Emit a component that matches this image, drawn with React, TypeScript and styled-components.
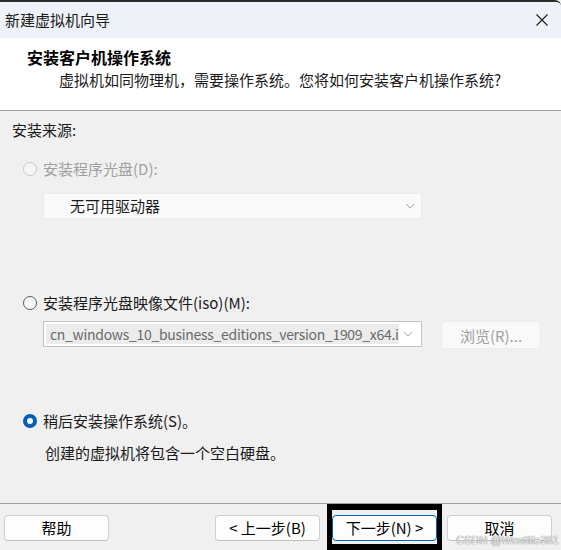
import styled, { createGlobalStyle, css } from 'styled-components'

const GlobalStyle = createGlobalStyle`
  html, body {
    margin: 0;
    padding: 0;
    background: #f0f0f0;
  }
  body {
    font-family: "Noto Sans CJK SC", "Noto Sans", sans-serif;
    font-size: 15px;
    color: #1a1a1a;
  }
`

const Window = styled.div`
  position: relative;
  width: 561px;
  height: 550px;
  display: flex;
  flex-direction: column;
  overflow: hidden;
  border-top: 2px solid #2d2d2d;
  box-sizing: border-box;
  border-top-right-radius: 6px;
`

const TitleBar = styled.div`
  height: 36px;
  display: flex;
  align-items: center;
  justify-content: space-between;
  padding: 0 13px 0 5px;
  background: #eef1f7;
`

const TitleText = styled.span`
  font-size: 15px;
  line-height: 20px;
  color: #1a1a1a;
`

const CloseButton = styled.button`
  width: 20px;
  height: 20px;
  padding: 0;
  border: none;
  background: transparent;
  display: flex;
  align-items: center;
  justify-content: flex-end;
`

const Header = styled.div`
  height: 73px;
  box-sizing: border-box;
  background: #ffffff;
  border-bottom: 1px solid #a0a0a0;
  padding-top: 9px;
  display: flex;
  flex-direction: column;
  gap: 3px;
`

const HeaderTitle = styled.div`
  padding-left: 27px;
  font-size: 16px;
  font-weight: 700;
  line-height: 20px;
  color: #000;
`

const HeaderSubtitle = styled.div`
  padding-left: 59px;
  font-size: 15px;
  line-height: 20px;
  color: #1a1a1a;
`

const Content = styled.div`
  flex: 1;
  display: flex;
  flex-direction: column;
  padding: 9px 0 0 12px;
  background: #f0f0f0;
`

const Line = styled.div<{ $top?: number; $indent?: number }>`
  margin-top: ${({ $top = 0 }) => $top}px;
  margin-left: ${({ $indent = 0 }) => $indent}px;
  line-height: 20px;
  font-size: 15px;
  color: #1a1a1a;
`

const RadioRow = styled.label<{ $top: number; $disabled?: boolean }>`
  margin-top: ${({ $top }) => $top}px;
  display: flex;
  align-items: center;
  gap: 6px;
  height: 20px;
  margin-left: 11px;
  line-height: 20px;
  color: ${({ $disabled }) => ($disabled ? '#a0a0a0' : '#1a1a1a')};
`

const RadioDot = styled.span<{ $checked?: boolean; $disabled?: boolean }>`
  width: 14px;
  height: 14px;
  box-sizing: border-box;
  border-radius: 50%;
  flex-shrink: 0;
  ${({ $checked, $disabled }) =>
    $checked
      ? css`
          background: #005fb8;
          display: flex;
          align-items: center;
          justify-content: center;
          &::after {
            content: '';
            width: 6px;
            height: 6px;
            border-radius: 50%;
            background: #fff;
          }
        `
      : css`
          border: 1px solid ${$disabled ? '#c6c6c6' : '#5a5a5a'};
          background: ${$disabled ? '#f5f5f5' : '#f7f7f7'};
        `}
`

const FieldRow = styled.div<{ $top: number }>`
  margin-top: ${({ $top }) => $top}px;
  margin-left: 31px;
  display: flex;
  align-items: flex-start;
  gap: 19px;
`

const Combo = styled.div<{ $variant: 'empty' | 'file' }>`
  width: 379px;
  height: 26px;
  box-sizing: border-box;
  display: flex;
  align-items: center;
  ${({ $variant }) =>
    $variant === 'empty'
      ? css`
          background: #fafafa;
          border: 1px solid #ececec;
          border-radius: 2px;
        `
      : css`
          background: #ffffff;
          border: 1px solid #c4c4c4;
          padding: 2px;
        `}
`

const ComboText = styled.div<{ $variant: 'empty' | 'file' }>`
  flex: 1;
  height: 100%;
  min-width: 0;
  overflow: hidden;
  white-space: nowrap;
  line-height: 20px;
  display: flex;
  align-items: center;
  ${({ $variant }) =>
    $variant === 'empty'
      ? css`
          padding-left: 26px;
          color: #1a1a1a;
        `
      : css`
          padding-left: 4px;
          margin-right: 4px;
          background: #ececec;
          color: #6a6a6a;
          font-size: 14px;
          letter-spacing: -0.3px;
        `}
`

const Chevron = styled.svg`
  flex-shrink: 0;
  margin-right: 6px;
`

const BrowseButton = styled.button`
  width: 100px;
  height: 28px;
  box-sizing: border-box;
  background: #f9f9f9;
  border: 1px solid #ececec;
  border-radius: 4px;
  font-family: inherit;
  font-size: 15px;
  color: #a0a0a0;
  padding: 0;
`

const Footer = styled.div`
  height: 47px;
  box-sizing: border-box;
  border-top: 1px solid #a0a0a0;
  padding: 11px 9px 0 4px;
  display: flex;
  align-items: flex-start;
  background: #f0f0f0;
`

const Spacer = styled.div`
  flex: 1;
`

const DialogButton = styled.button<{ $primary?: boolean; $gap?: number }>`
  width: 105px;
  height: 26px;
  box-sizing: border-box;
  margin-left: ${({ $gap = 0 }) => $gap}px;
  background: #fdfdfd;
  border: 1px solid ${({ $primary }) => ($primary ? '#005fb8' : '#d0d0d0')};
  border-bottom-color: ${({ $primary }) => ($primary ? '#005fb8' : '#c0c0c0')};
  border-radius: 4px;
  font-family: inherit;
  font-size: 15px;
  line-height: 20px;
  color: #000;
  padding: 0;
`

const Highlight = styled.div`
  position: absolute;
  left: 327px;
  top: 502px;
  width: 115px;
  height: 48px;
  box-sizing: border-box;
  border: 5px solid #000;
  border-top-width: 6px;
  border-bottom-width: 8px;
  pointer-events: none;
`

const Watermark = styled.div`
  position: absolute;
  right: 2px;
  top: 531px;
  font-family: "Liberation Sans", Arial, sans-serif;
  font-size: 11px;
  line-height: 14px;
  color: #f6f6f6;
  text-shadow: 0 0 1px #7a7a7a, 0 0 1px #7a7a7a;
  pointer-events: none;
  white-space: nowrap;
`

const ChevronIcon = () => (
  <Chevron width="10" height="6" viewBox="0 0 10 6">
    <path d="M1 1 L5 5 L9 1" fill="none" stroke="#a8a8a8" strokeWidth="1" />
  </Chevron>
)

export default function App() {
  return (
    <>
      <GlobalStyle />
      <Window>
        <TitleBar>
          <TitleText>新建虚拟机向导</TitleText>
          <CloseButton aria-label="关闭">
            <svg width="12" height="12" viewBox="0 0 12 12">
              <path d="M0.5 0.5 L11.5 11.5 M11.5 0.5 L0.5 11.5" stroke="#1a1a1a" strokeWidth="1.1" />
            </svg>
          </CloseButton>
        </TitleBar>

        <Header>
          <HeaderTitle>安装客户机操作系统</HeaderTitle>
          <HeaderSubtitle>虚拟机如同物理机，需要操作系统。您将如何安装客户机操作系统?</HeaderSubtitle>
        </Header>

        <Content>
          <Line>安装来源:</Line>

          <RadioRow $top={19} $disabled>
            <RadioDot $disabled />
            安装程序光盘(D):
          </RadioRow>
          <FieldRow $top={14}>
            <Combo $variant="empty">
              <ComboText $variant="empty">无可用驱动器</ComboText>
              <ChevronIcon />
            </Combo>
          </FieldRow>

          <RadioRow $top={74}>
            <RadioDot />
            安装程序光盘映像文件(iso)(M):
          </RadioRow>
          <FieldRow $top={8}>
            <Combo $variant="file">
              <ComboText $variant="file">cn_windows_10_business_editions_version_1909_x64.iso</ComboText>
              <ChevronIcon />
            </Combo>
            <BrowseButton disabled>浏览(R)...</BrowseButton>
          </FieldRow>

          <RadioRow $top={62}>
            <RadioDot $checked />
            稍后安装操作系统(S)。
          </RadioRow>
          <Line $top={12} $indent={33}>
            创建的虚拟机将包含一个空白硬盘。
          </Line>
        </Content>

        <Footer>
          <DialogButton>帮助</DialogButton>
          <Spacer />
          <DialogButton>&lt; 上一步(B)</DialogButton>
          <DialogButton $primary $gap={12}>
            下一步(N) &gt;
          </DialogButton>
          <DialogButton $gap={10}>取消</DialogButton>
        </Footer>

        <Highlight />
        <Watermark>CSDN @Westlife361</Watermark>
      </Window>
    </>
  )
}
